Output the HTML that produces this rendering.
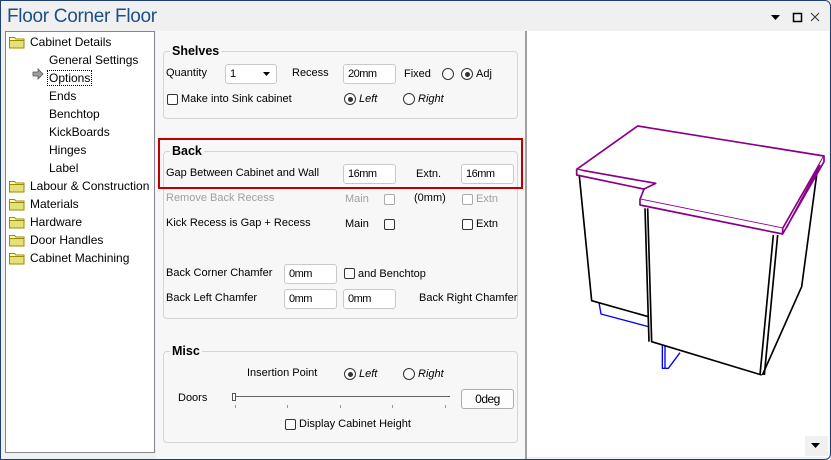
<!DOCTYPE html>
<html><head><meta charset="utf-8"><style>
*{box-sizing:border-box;margin:0;padding:0}
body{width:831px;height:460px;overflow:hidden;background:#f0f0f0;font-family:"Liberation Sans",sans-serif;font-size:11px;color:#000;position:relative}
.a{position:absolute;white-space:nowrap}
.frame{position:absolute;left:0;top:0;width:831px;height:460px;border:1px solid #1f3f72;border-radius:0 6px 6px 0;pointer-events:none}
.t{position:absolute;white-space:nowrap;line-height:14px}
.grp{position:absolute;border:1px solid #d5d5d5;border-radius:4px}
.gt{position:absolute;font-weight:bold;font-size:12.5px;background:#f7f7f7;padding:0 2px;line-height:14px}
.in{position:absolute;height:20px;background:#fff;border:1px solid #c9c9c9;border-radius:3px;padding:2px 4px;line-height:14px;font-size:11px;letter-spacing:-0.5px}
.cb{position:absolute;width:11px;height:11px;border:1px solid #333;border-radius:2px;background:#fff}
.cb.g{border-color:#aaa}
.rd{position:absolute;width:12px;height:12px;border:1px solid #333;border-radius:50%;background:#fff}
.rd.on::after{content:"";position:absolute;left:2.5px;top:2.5px;width:5px;height:5px;border-radius:50%;background:#333}
.gray{color:#a0a0a0}
i{font-style:italic}
.tree .t{font-size:12px}
</style></head><body>
<div class="t" style="left:7px;top:6px;font-size:19px;line-height:22px;color:#1b4f8a;letter-spacing:-0.3px">Floor Corner Floor</div>
<svg class="a" style="left:770px;top:12px" width="50" height="12"><path d="M1 3h9l-4.5 5z" fill="#000"/><rect x="23.5" y="1.5" width="8" height="8" fill="none" stroke="#000" stroke-width="1.5"/><path d="M41 1l8 8M49 1l-8 8" stroke="#333" stroke-width="1"/></svg>

<div class="a" style="left:5px;top:31px;width:150px;height:422px;background:#fff;border:1px solid #828790"></div>
<svg class="a" style="left:0;top:31px" width="160" height="240">
<g fill="#ffffb8" stroke="#9a8b00" stroke-width="1">
<path d="M9.5 6.5h5l1.5 1.5h8v9h-14.5z"/><path d="M9.5 9.5h14.5v7.5h-14.5z" fill="#e6e07a"/>
</g>
<path d="M33 41h5v-3l5 5-5 5v-3h-5z" fill="#9aa0a0" stroke="#555" stroke-width="0.8"/>
<g fill="#ffffb8" stroke="#9a8b00" stroke-width="1">
<path d="M9.5 150.5h5l1.5 1.5h8v9h-14.5z"/><path d="M9.5 153.5h14.5v7.5h-14.5z" fill="#e6e07a"/>
<path d="M9.5 168.5h5l1.5 1.5h8v9h-14.5z"/><path d="M9.5 171.5h14.5v7.5h-14.5z" fill="#e6e07a"/>
<path d="M9.5 186.5h5l1.5 1.5h8v9h-14.5z"/><path d="M9.5 189.5h14.5v7.5h-14.5z" fill="#e6e07a"/>
<path d="M9.5 204.5h5l1.5 1.5h8v9h-14.5z"/><path d="M9.5 207.5h14.5v7.5h-14.5z" fill="#e6e07a"/>
<path d="M9.5 222.5h5l1.5 1.5h8v9h-14.5z"/><path d="M9.5 225.5h14.5v7.5h-14.5z" fill="#e6e07a"/>
</g></svg>
<div class="tree">
<div class="t" style="left:30px;top:35px">Cabinet Details</div>
<div class="t" style="left:49px;top:53px">General Settings</div>
<div class="t" style="left:47px;top:70px;border:1px dotted #000;padding:0 1px;line-height:14px">Options</div>
<div class="t" style="left:49px;top:89px">Ends</div>
<div class="t" style="left:49px;top:107px">Benchtop</div>
<div class="t" style="left:49px;top:125px">KickBoards</div>
<div class="t" style="left:49px;top:143px">Hinges</div>
<div class="t" style="left:49px;top:161px">Label</div>
<div class="t" style="left:30px;top:179px">Labour &amp; Construction</div>
<div class="t" style="left:30px;top:197px">Materials</div>
<div class="t" style="left:30px;top:215px">Hardware</div>
<div class="t" style="left:30px;top:233px">Door Handles</div>
<div class="t" style="left:30px;top:251px">Cabinet Machining</div>
</div>

<div class="a" style="left:156px;top:31px;width:370px;height:428px;background:#f7f7f7"></div>
<div class="a" style="left:525px;top:31px;width:2px;height:428px;background:#a0a0a0"></div>

<div class="grp" style="left:163px;top:51px;width:355px;height:68px"></div>
<div class="gt" style="left:170px;top:44px">Shelves</div>
<div class="t" style="left:166px;top:66px">Quantity</div>
<div class="in" style="left:225px;top:64px;width:52px;letter-spacing:0">1</div>
<svg class="a" style="left:263px;top:72px" width="8" height="5"><path d="M0 0h7l-3.5 4z"/></svg>
<div class="t" style="left:292px;top:66px">Recess</div>
<div class="in" style="left:343px;top:64px;width:53px">20mm</div>
<div class="t" style="left:404px;top:67px">Fixed</div>
<div class="rd" style="left:442px;top:68px"></div>
<div class="rd on" style="left:461px;top:68px"></div>
<div class="t" style="left:476px;top:67px">Adj</div>
<div class="cb" style="left:167px;top:94px"></div>
<div class="t" style="left:181px;top:92px">Make into Sink cabinet</div>
<div class="rd on" style="left:344px;top:93px"></div>
<div class="t" style="left:359px;top:92px"><i>Left</i></div>
<div class="rd" style="left:403px;top:93px"></div>
<div class="t" style="left:418px;top:92px"><i>Right</i></div>

<div class="grp" style="left:163px;top:151px;width:355px;height:168px"></div>
<div class="gt" style="left:170px;top:144px">Back</div>
<div class="a" style="left:158px;top:138px;width:365px;height:51px;border:2px solid #c00000"></div>
<div class="t" style="left:166px;top:166px">Gap Between Cabinet and Wall</div>
<div class="in" style="left:343px;top:164px;width:53px">16mm</div>
<div class="t" style="left:416px;top:167px">Extn.</div>
<div class="in" style="left:461px;top:164px;width:53px">16mm</div>
<div class="t gray" style="left:166px;top:191px">Remove Back Recess</div>
<div class="t gray" style="left:345px;top:192px">Main</div>
<div class="cb g" style="left:384px;top:194px"></div>
<div class="t" style="left:414px;top:191px">(0mm)</div>
<div class="cb g" style="left:462px;top:194px"></div>
<div class="t gray" style="left:476px;top:192px">Extn</div>
<div class="t" style="left:166px;top:216px">Kick Recess is Gap + Recess</div>
<div class="t" style="left:345px;top:217px">Main</div>
<div class="cb" style="left:384px;top:219px"></div>
<div class="cb" style="left:462px;top:219px"></div>
<div class="t" style="left:476px;top:217px">Extn</div>
<div class="t" style="left:166px;top:266px">Back Corner Chamfer</div>
<div class="in" style="left:284px;top:264px;width:53px">0mm</div>
<div class="cb" style="left:344px;top:268px"></div>
<div class="t" style="left:358px;top:267px">and Benchtop</div>
<div class="t" style="left:166px;top:291px">Back Left Chamfer</div>
<div class="in" style="left:284px;top:289px;width:53px">0mm</div>
<div class="in" style="left:343px;top:289px;width:53px">0mm</div>
<div class="t" style="left:419px;top:291px">Back Right Chamfer</div>

<div class="grp" style="left:163px;top:351px;width:355px;height:92px"></div>
<div class="gt" style="left:170px;top:344px">Misc</div>
<div class="t" style="left:247px;top:366px">Insertion Point</div>
<div class="rd on" style="left:344px;top:368px"></div>
<div class="t" style="left:359px;top:367px"><i>Left</i></div>
<div class="rd" style="left:403px;top:368px"></div>
<div class="t" style="left:418px;top:367px"><i>Right</i></div>
<div class="t" style="left:178px;top:391px">Doors</div>
<svg class="a" style="left:228px;top:390px" width="225" height="20">
<path d="M5 6.5h217" stroke="#666" stroke-width="1"/>
<rect x="4.5" y="3.5" width="3" height="7" fill="#fff" stroke="#555"/>
<g stroke="#999"><path d="M7.5 15v3M59.5 15v3M112.5 15v3M164.5 15v3M217.5 15v3"/></g></svg>
<div class="in" style="left:461px;top:389px;width:53px;height:20px;text-align:center;border-color:#adadad;background:#fdfdfd;font-size:12px">0deg</div>
<div class="cb" style="left:285px;top:419px"></div>
<div class="t" style="left:299px;top:417px">Display Cabinet Height</div>

<div class="a" style="left:527px;top:31px;width:302px;height:426px;background:#fff"></div>
<div class="a" style="left:805px;top:436px;width:23px;height:20px;background:#f0f0f0"></div>
<svg class="a" style="left:811px;top:443px" width="10" height="6"><path d="M0 0h9l-4.5 5z"/></svg>

<svg class="a" style="left:525px;top:110px" width="306" height="270" viewBox="0 0 918 810">
<g fill="none" stroke-linejoin="round">
<g stroke="#0000ff" stroke-width="4">
<path d="M222 578L228 612L370 650"/>
<path d="M412 705L412 775L430 775L465 728M420 705L420 775"/>
</g>
<g stroke="#000" stroke-width="5">
<path d="M163 198L200 572L370 620"/>
<path d="M360 295L372 695M368 295L380 695L710 795"/>
<path d="M745 375L705 795M758 375L718 795"/>
<path d="M875 195L830 530L712 795"/>
</g>
<g stroke="#880088" stroke-width="5" fill="#fff">
<path d="M155 178L338 48L897 138L773 355L345 268L357 237L392 220Z"/>
<path d="M155 178L155 195L360 238M345 268L345 285L773 372L773 355M897 138L897 155L773 372M785 352L885 165"/>
</g>
</g></svg>
<div class="frame"></div>
</body></html>
